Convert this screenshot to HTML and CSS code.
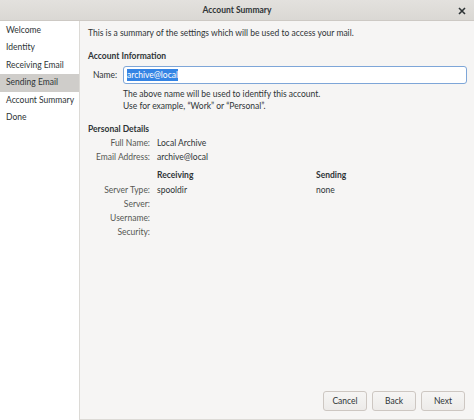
FILE: index.html
```html
<!DOCTYPE html>
<html lang="en">
<head>
<meta charset="utf-8">
<title>Account Summary</title>
<link rel="stylesheet" href="styles.css">
</head>
<body>
<div class="window">
  <header class="titlebar">
    <span class="title">Account Summary</span>
    <button class="close" aria-label="Close">
      <svg width="8" height="8" viewBox="0 0 8 8"><path d="M1 1L7 7M7 1L1 7" stroke="#2e3436" stroke-width="1.6"/></svg>
    </button>
  </header>
  <div class="body">
    <nav class="sidebar">
      <div class="step">Welcome</div>
      <div class="step">Identity</div>
      <div class="step">Receiving Email</div>
      <div class="step selected">Sending Email</div>
      <div class="step">Account Summary</div>
      <div class="step">Done</div>
    </nav>
    <main class="content">
      <p class="intro">This is a summary of the settings which will be used to access your mail.</p>
      <h2 class="section">Account Information</h2>
      <div class="name-row">
        <label class="name-label">Name:</label>
        <div class="entry"><span class="sel">archive@local</span></div>
      </div>
      <p class="hint">The above name will be used to identify this account.<br>Use for example, “Work” or “Personal”.</p>
      <h2 class="section personal">Personal Details</h2>
      <div class="details">
        <span class="key">Full Name:</span><span class="val">Local Archive</span><span></span>
        <span class="key">Email Address:</span><span class="val">archive@local</span><span></span>
        <span class="key"></span><span class="col-head">Receiving</span><span class="col-head">Sending</span>
        <span class="key">Server Type:</span><span class="val">spooldir</span><span class="val">none</span>
        <span class="key">Server:</span><span class="val"></span><span></span>
        <span class="key">Username:</span><span class="val"></span><span></span>
        <span class="key">Security:</span><span class="val"></span><span></span>
      </div>
      <div class="actions">
        <button class="btn">Cancel</button>
        <button class="btn">Back</button>
        <button class="btn">Next</button>
      </div>
    </main>
  </div>
</div>
</body>
</html>
```
FILE: styles.css
```css
* { box-sizing: border-box; }
html, body { margin: 0; padding: 0; }
body {
  width: 474px;
  height: 420px;
  font-family: Lato, "Noto Sans", sans-serif;
  font-size: 8.5px;
  color: #2e3436;
  background: #f6f5f4;
}
.window {
  display: flex;
  flex-direction: column;
  height: 420px;
}
.titlebar {
  height: 21px;
  flex: none;
  display: flex;
  align-items: center;
  justify-content: center;
  position: relative;
  background: linear-gradient(#e3e1de, #dad8d4);
  border-bottom: 1px solid #cdc9c4;
}
.title { font-weight: bold; font-size: 8.5px; color: #2e3436; }
.close {
  position: absolute;
  right: 6px;
  top: 5px;
  width: 12px;
  height: 12px;
  border: 0;
  background: none;
  padding: 0;
  display: flex;
  align-items: center;
  justify-content: center;
}
.body {
  flex: 1;
  display: flex;
  min-height: 0;
}
.sidebar {
  width: 80px;
  flex: none;
  background: #ffffff;
  border-right: 1px solid #dcdad6;
  padding-top: 0.5px;
}
.step {
  height: 17.6px;
  line-height: 17.6px;
  padding-left: 6px;
  white-space: nowrap;
}
.step.selected { background: #cfcdca; }
.content {
  flex: 1;
  display: flex;
  flex-direction: column;
  padding: 6px 7px 8px 8px;
  border-bottom: 1px solid #dcdad6;
}
.intro { margin: 0; line-height: 13px; }
.section {
  margin: 10px 0 0;
  font-size: 8.5px;
  font-weight: bold;
  line-height: 13px;
}
.name-row {
  display: flex;
  align-items: center;
  margin-top: 3px;
  padding-left: 5px;
}
.name-label { width: 30px; color: #2e3436; }
.entry {
  flex: 1;
  height: 18px;
  background: #fff;
  border: 1.5px solid #7ea6d8;
  border-radius: 3px;
  padding: 0 3px;
  display: flex;
  align-items: center;
}
.sel { background: #3584e4; color: #fff; line-height: 12px; }
.hint {
  margin: 5px 0 0 35px;
  line-height: 11.5px;
}
.personal { margin-top: 11px; }
.details {
  display: grid;
  grid-template-columns: 62px 152px 1fr;
  column-gap: 7px;
  margin-top: 0;
  line-height: 14.2px;
}
.key { text-align: right; color: #555753; }
.col-head { font-weight: bold; margin-top: 4px; }
.actions {
  margin-top: auto;
  display: flex;
  justify-content: flex-end;
  gap: 5px;
  padding-right: 2px;
}
.btn {
  font-family: inherit;
  font-size: 8.5px;
  color: #2e3436;
  width: 44px;
  height: 20px;
  background: linear-gradient(#f6f5f4, #edebe9);
  border: 1px solid #cdc7c2;
  border-radius: 3px;
  padding: 0;
}
```
